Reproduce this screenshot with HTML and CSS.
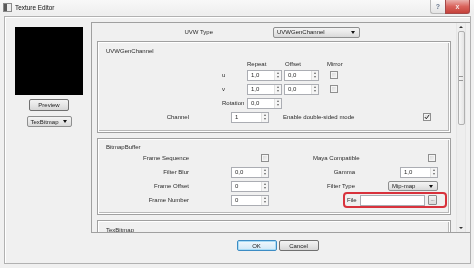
FILE: index.html
```html
<!DOCTYPE html>
<html>
<head>
	<title>Texture Editor</title>
	<link rel="stylesheet" href="styles.css">
</head>
<body>
<div class="window">
	<div class="titlebar">
		<svg class="app-icon" width="9" height="9" viewBox="0 0 9 9">
			<rect x="0.5" y="0.5" width="8" height="8" fill="#ececec" stroke="#8a8a8a"/>
			<rect x="1" y="1" width="3" height="7" fill="#5a5a5a"/>
		</svg>
		<span class="title">Texture Editor</span>
		<div class="caption">
			<span class="cap-btn help">?</span>
			<span class="cap-btn close">x</span>
		</div>
	</div>

	<div class="frame">
		<div class="side">
			<div class="preview"></div>
			<div class="btn preview-btn">Preview</div>
			<div class="combo side-combo">TexBitmap<span class="arrow"></span></div>
		</div>

		<div class="main">
			<div class="scroll">
				<div class="scroll-body">
					<div class="type-row">
						<span class="type-label">UVW Type</span>
						<div class="combo type-combo">UVWGenChannel<span class="arrow"></span></div>
					</div>

					<div class="group uvw">
						<div class="group-title">UVWGenChannel</div>
						<div class="uv-head">
							<span class="h-repeat">Repeat</span>
							<span class="h-offset">Offset</span>
							<span>Mirror</span>
						</div>
						<div class="uv-row">
							<span class="uv-label">u</span>
							<div class="spin"><span class="val">1,0</span><span class="arrows"><i class="up"></i><i class="down"></i></span></div>
							<div class="spin second"><span class="val">0,0</span><span class="arrows"><i class="up"></i><i class="down"></i></span></div>
							<span class="check mirror"></span>
						</div>
						<div class="uv-row">
							<span class="uv-label">v</span>
							<div class="spin"><span class="val">1,0</span><span class="arrows"><i class="up"></i><i class="down"></i></span></div>
							<div class="spin second"><span class="val">0,0</span><span class="arrows"><i class="up"></i><i class="down"></i></span></div>
							<span class="check mirror"></span>
						</div>
						<div class="uv-row">
							<span class="uv-label">Rotation</span>
							<div class="spin"><span class="val">0,0</span><span class="arrows"><i class="up"></i><i class="down"></i></span></div>
						</div>
						<div class="row">
							<span class="lbl">Channel</span>
							<div class="spin field"><span class="val">1</span><span class="arrows"><i class="up"></i><i class="down"></i></span></div>
							<span class="double-text">Enable double-sided mode</span>
							<span class="check on">
								<svg width="6" height="6" viewBox="0 0 6 6"><polyline points="0.8,3 2.3,4.8 5.2,0.8" fill="none" stroke="#2b2b2b" stroke-width="1"/></svg>
							</span>
						</div>
					</div>

					<div class="group bitmap">
						<div class="group-title">BitmapBuffer</div>
						<div class="form">
							<div class="col-left">
								<div class="row">
									<span class="lbl">Frame Sequence</span>
									<div class="ctl"><span class="check"></span></div>
								</div>
								<div class="row">
									<span class="lbl">Filter Blur</span>
									<div class="spin field"><span class="val">0,0</span><span class="arrows"><i class="up"></i><i class="down"></i></span></div>
								</div>
								<div class="row">
									<span class="lbl">Frame Offset</span>
									<div class="spin field"><span class="val">0</span><span class="arrows"><i class="up"></i><i class="down"></i></span></div>
								</div>
								<div class="row">
									<span class="lbl">Frame Number</span>
									<div class="spin field"><span class="val">0</span><span class="arrows"><i class="up"></i><i class="down"></i></span></div>
								</div>
							</div>
							<div class="col-right">
								<div class="row">
									<span class="rlbl maya">Maya Compatible</span>
									<div class="rctl"><span class="check"></span></div>
								</div>
								<div class="row">
									<span class="rlbl">Gamma</span>
									<div class="spin gamma"><span class="val">1,0</span><span class="arrows"><i class="up"></i><i class="down"></i></span></div>
								</div>
								<div class="row">
									<span class="rlbl">Filter Type</span>
									<div class="combo filter-combo">Mip-map<span class="arrow"></span></div>
								</div>
								<div class="row">
									<div class="highlight">
										<span class="file-label">File</span>
										<span class="file-edit"></span>
										<span class="browse">...</span>
									</div>
								</div>
							</div>
						</div>
					</div>

					<div class="group tex">
						<div class="group-title">TexBitmap</div>
					</div>
				</div>

				<div class="scrollbar">
					<div class="sb-btn"><i class="up"></i></div>
					<div class="sb-thumb"><span class="grip"></span></div>
					<div class="sb-track"></div>
					<div class="sb-btn"><i class="down"></i></div>
				</div>
			</div>

			<div class="buttons">
				<div class="btn ok">OK</div>
				<div class="btn cancel">Cancel</div>
			</div>
		</div>
	</div>
</div>
</body>
</html>
```

FILE: styles.css
```css
body{
	margin: 0;
	background: #f0f0f0;
	font-family: "Liberation Sans", Arial, sans-serif;
	font-size: 6px;
	color: #2a2a2a;
}
.window{
	width: 474px;
	height: 268px;
	background: #f0f0f0;
	display: flex;
	flex-direction: column;
	will-change: transform;
}

/* title bar */
.titlebar{
	height: 15px;
	display: flex;
	align-items: center;
	background: linear-gradient(#f8f8f8, #eeeeee);
}
.app-icon{
	margin-left: 3px;
}
.title{
	margin-left: 3px;
	font-size: 6.4px;
	color: #111;
}
.caption{
	margin-left: auto;
	margin-right: 4px;
	align-self: flex-start;
	display: flex;
}
.cap-btn{
	height: 14px;
	box-sizing: border-box;
	display: flex;
	align-items: center;
	justify-content: center;
	font-size: 7px;
	font-weight: bold;
}
.help{
	width: 15px;
	color: #6b7a90;
	border: 1px solid #b9b9b9;
	border-top: none;
	border-right: none;
	border-radius: 0 0 0 3px;
	background: linear-gradient(#fbfbfb, #e4e4e4);
}
.close{
	width: 25px;
	color: #f4e4e4;
	border: 1px solid #a54848;
	border-top: none;
	border-radius: 0 0 3px 0;
	background: linear-gradient(#eab1ad, #d9635c 50%, #c5423a);
}

/* main frame */
.frame{
	margin: 1px 3px 0 4px;
	height: 248px;
	box-sizing: border-box;
	border: 1px solid #b1b1b1;
	box-shadow: inset 1px 1px 0 #fff;
	display: flex;
}
.side{
	width: 86px;
	box-sizing: border-box;
	padding: 10px 0 0 2px;
	display: flex;
	flex-direction: column;
	align-items: center;
}
.preview{
	width: 68px;
	height: 68px;
	background: #000;
}
.preview-btn{
	margin-top: 4px;
	width: 40px;
	height: 12px;
}
.side-combo{
	margin-top: 5px;
	width: 45px;
	height: 11px;
}
.main{
	flex: 1;
	padding-top: 5px;
	display: flex;
	flex-direction: column;
}

/* buttons */
.btn{
	box-sizing: border-box;
	border: 1px solid #707070;
	border-radius: 2px;
	background: linear-gradient(#f3f3f3, #e6e6e6 50%, #d6d6d6);
	display: flex;
	align-items: center;
	justify-content: center;
	color: #222;
}
.buttons{
	margin-top: 7px;
	padding-right: 6px;
	display: flex;
	justify-content: center;
	gap: 2px;
}
.buttons .btn{
	width: 40px;
	height: 11px;
}
.ok{
	border-color: #3c8cc4;
	box-shadow: inset 0 0 0 1px #a9dcf6;
	background: linear-gradient(#f0f8fd, #e0f0fa 50%, #cfe8f7);
}

/* combo boxes */
.combo{
	box-sizing: border-box;
	border: 1px solid #8e8f8f;
	border-radius: 2px;
	background: linear-gradient(#f4f4f4, #e8e8e8 50%, #d9d9d9);
	padding-left: 3px;
	display: flex;
	align-items: center;
	color: #222;
}
.combo .arrow{
	margin-left: auto;
	margin-right: 4px;
	border-left: 2.5px solid transparent;
	border-right: 2.5px solid transparent;
	border-top: 3px solid #111;
}

/* scroll area */
.scroll{
	height: 211px;
	box-sizing: border-box;
	border: 1px solid #a0a0a0;
	border-right: none;
	display: flex;
	overflow: hidden;
}
.scroll-body{
	flex: 1;
	overflow: hidden;
}
.scrollbar{
	width: 10px;
	margin-right: 4px;
	box-sizing: border-box;
	border-left: 1px solid #e6e6e6;
	border-right: 1px solid #e6e6e6;
	background: #eeeeee;
	display: flex;
	flex-direction: column;
}
.sb-btn{
	height: 8px;
	display: flex;
	align-items: center;
	justify-content: center;
}
.sb-thumb{
	height: 94px;
	margin: 0 0.5px;
	box-sizing: border-box;
	border: 1px solid #b0b0b0;
	border-radius: 2px;
	background: linear-gradient(to right, #f7f7f7, #e4e4e4);
	display: flex;
	align-items: center;
	justify-content: center;
}
.grip{
	width: 4px;
	height: 3px;
	border-top: 1px solid #999;
	border-bottom: 1px solid #999;
}
.sb-track{
	flex: 1;
}
i.up{
	display: block;
	border-left: 2px solid transparent;
	border-right: 2px solid transparent;
	border-bottom: 2px solid #333;
}
i.down{
	display: block;
	border-left: 2px solid transparent;
	border-right: 2px solid transparent;
	border-top: 2px solid #333;
}

.type-row{
	height: 18px;
	display: flex;
	align-items: center;
}
.type-label{
	width: 121px;
	text-align: right;
}
.type-combo{
	margin-left: 60px;
	width: 87px;
	height: 11px;
}

/* group boxes */
.group{
	box-sizing: border-box;
	margin: 0 5px 5px 5px;
	border: 1px solid #a0a0a0;
	box-shadow: inset 1px 1px 0 #fff, inset -1px -1px 0 #fff, inset -2px -2px 0 #b8b8b8;
}
.group-title{
	margin-top: 5px;
	padding-left: 8px;
	line-height: 8px;
}
.uvw{
	height: 92px;
}
.bitmap{
	height: 77px;
}
.bitmap .group-title{
	margin-top: 4px;
}
.tex{
	height: 40px;
}

.uv-head{
	margin-top: 6px;
	height: 7px;
	line-height: 7px;
	padding-left: 149px;
	display: flex;
}
.h-repeat{
	width: 38px;
}
.h-offset{
	width: 42px;
}
.uv-row{
	height: 14px;
	padding-left: 124px;
	display: flex;
	align-items: center;
}
.uv-label{
	width: 25px;
}
.row{
	height: 14px;
	display: flex;
	align-items: center;
}
.lbl{
	width: 91px;
	text-align: right;
	white-space: nowrap;
}

/* spin boxes */
.spin{
	width: 35px;
	height: 11px;
	box-sizing: border-box;
	border: 1px solid #abadb3;
	background: #fff;
	display: flex;
}
.spin .val{
	flex: 1;
	padding-left: 3px;
	line-height: 9px;
}
.spin .arrows{
	width: 6px;
	border-left: 1px solid #e2e2e2;
	background: #f5f5f5;
	display: flex;
	flex-direction: column;
	align-items: center;
	justify-content: space-evenly;
}
.spin .arrows i{
	border-left-width: 1.5px;
	border-right-width: 1.5px;
	border-bottom-color: #666;
	border-top-color: #666;
}
.spin.second{
	margin-left: 2px;
}
.spin.field{
	margin-left: 42px;
	width: 38px;
}
.spin.gamma{
	margin-left: 45px;
	width: 38px;
}

/* check boxes */
.check{
	width: 8px;
	height: 8px;
	box-sizing: border-box;
	border: 1px solid #8f8f8f;
	background: linear-gradient(135deg, #d8d8d8, #f7f7f7);
	box-shadow: inset 0 0 0 1px #f4f4f4;
	display: flex;
	align-items: center;
	justify-content: center;
}
.check.mirror{
	margin-left: 11px;
}
.double-text{
	margin-left: 14px;
	width: 140px;
	white-space: nowrap;
}

/* bitmap buffer form */
.form{
	display: flex;
}
.col-left{
	width: 173px;
}
.col-right{
	flex: 1;
}
.ctl{
	margin-left: 42px;
	width: 38px;
	display: flex;
	justify-content: flex-end;
}
.rlbl{
	width: 84px;
	text-align: right;
	white-space: nowrap;
}
.rlbl.maya{
	text-align: left;
	padding-left: 42px;
	box-sizing: border-box;
}
.rctl{
	margin-left: 45px;
	width: 38px;
	padding-right: 2px;
	box-sizing: border-box;
	display: flex;
	justify-content: flex-end;
}
.filter-combo{
	margin-left: 33px;
	width: 50px;
	height: 10px;
}
.highlight{
	margin-left: 72px;
	width: 104px;
	height: 16px;
	box-sizing: border-box;
	border: 2px solid #d8323c;
	border-radius: 4px;
	padding-left: 2px;
	display: flex;
	align-items: center;
}
.file-label{
	width: 13px;
}
.file-edit{
	width: 65px;
	height: 11px;
	box-sizing: border-box;
	border: 1px solid #abadb3;
	background: #fff;
}
.browse{
	margin-left: 3px;
	width: 9px;
	height: 10px;
	box-sizing: border-box;
	border: 1px solid #8c8c8c;
	border-radius: 1px;
	background: linear-gradient(#f4f4f4, #dadada);
	font-size: 5px;
	line-height: 6px;
	text-align: center;
	color: #333;
}
```
